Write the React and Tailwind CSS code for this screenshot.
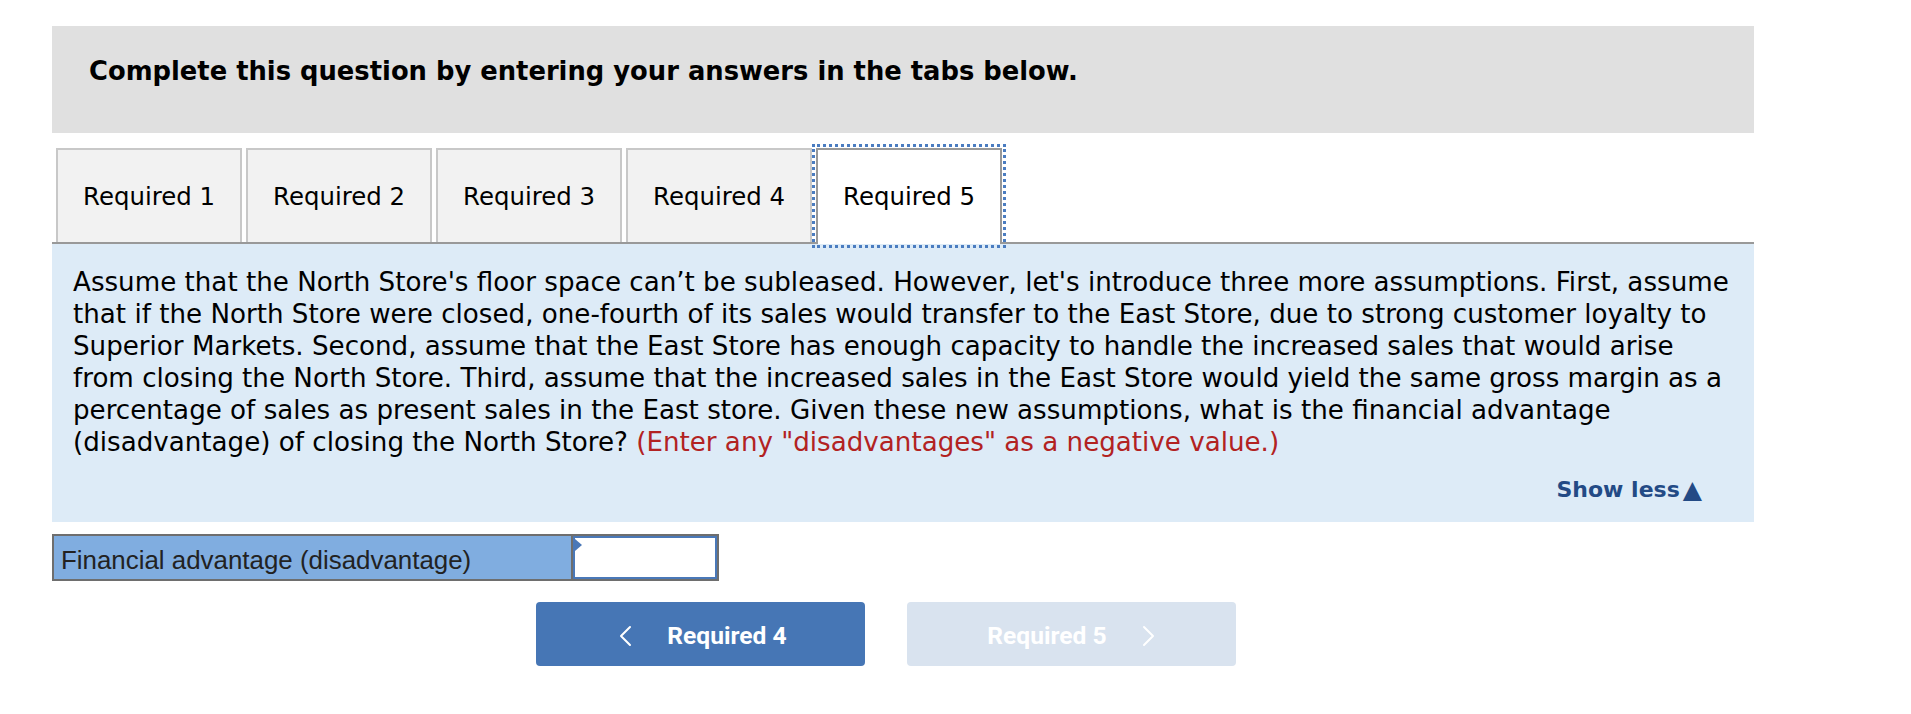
import React from 'react';

const tabs = ['Required 1', 'Required 2', 'Required 3', 'Required 4', 'Required 5'];

const Chevron = ({ dir }) => (
  <svg width="14" height="22" viewBox="0 0 14 22" fill="none" stroke="currentColor" strokeWidth="2" strokeLinecap="round" strokeLinejoin="round">
    {dir === 'left' ? <polyline points="12,2 3,11 12,20" /> : <polyline points="2,2 11,11 2,20" />}
  </svg>
);

const App = () => {
  return (
    <div className="w-[1911px] h-[714px] bg-white font-['DejaVu_Sans',Verdana,sans-serif] text-black">
      <div className="w-[1754px] pl-[52px] pt-[26px]">
        {/* Header */}
        <div className="h-[107px] bg-[#e0e0e0] pl-[37px] pt-[30px]">
          <h2 className="text-[25.8px] leading-[30px] font-bold">
            Complete this question by entering your answers in the tabs below.
          </h2>
        </div>

        {/* Tabs */}
        <div className="mt-[15px] flex items-start gap-[4px] pl-[4px] border-b-2 border-[#999]">
          {tabs.map((t, i) =>
            i === 4 ? (
              <button
                key={t}
                className="w-[186px] h-[96px] -mb-[2px] bg-white border-2 border-b-0 border-[#999] outline-[3px] outline-dotted outline-[#4a7cc0] outline-offset-[1px] text-[24.4px]"
              >
                {t}
              </button>
            ) : (
              <button
                key={t}
                className="w-[186px] h-[94px] pt-[2px] bg-[#f2f2f2] border-2 border-b-0 border-[#c8c8c8] text-[24.4px]"
              >
                {t}
              </button>
            )
          )}
        </div>

        {/* Question panel */}
        <div className="bg-[#ddebf7] pt-[22px] pl-[21px] pr-[20px] pb-[19px]">
          <p className="text-[26.15px] leading-[32px]">
            Assume that the North Store's floor space can’t be subleased. However, let's introduce three more
            assumptions. First, assume that if the North Store were closed, one-fourth of its sales would transfer to
            the East Store, due to strong customer loyalty to Superior Markets. Second, assume that the East Store has
            enough capacity to handle the increased sales that would arise from closing the North Store. Third, assume
            that the increased sales in the East Store would yield the same gross margin as a percentage of sales as
            present sales in the East store. Given these new assumptions, what is the financial advantage
            (disadvantage) of closing the North Store?{' '}
            <span className="text-[#b22222]">(Enter any "disadvantages" as a negative value.)</span>
          </p>
          <div className="mt-[19px] flex justify-end pr-[32px]">
            <button className="flex items-center text-[22px] leading-[26px] font-bold text-[#234a85]">
              Show less<span className="ml-[3px] text-[25px]">▲</span>
            </button>
          </div>
        </div>

        {/* Answer row */}
        <div className="mt-[12px] flex w-[667px] h-[47px] border-2 border-[#6e6e6e] font-['Liberation_Sans',Arial,sans-serif]">
          <div className="flex-1 flex items-center bg-[#80ade0] border-r-2 border-[#6e6e6e] pl-[7px] pt-[5px] text-[25.9px] text-[#222]">
            Financial advantage (disadvantage)
          </div>
          <div className="relative w-[144px] bg-white border-2 border-[#4a78b8]">
            <span className="absolute left-0 top-[1px] w-0 h-0 border-y-[6px] border-y-transparent border-l-[7px] border-l-[#4a78b8]" />
            <input type="text" className="w-full h-full px-2 outline-none bg-transparent" />
          </div>
        </div>

        {/* Navigation */}
        <div className="mt-[21px] flex gap-[42px] pl-[484px] font-['Roboto',sans-serif]">
          <button className="w-[329px] h-[64px] pt-[4px] pl-[4px] rounded-[4px] bg-[#4676b5] text-white flex items-center justify-center gap-[35px] text-[24.6px] font-bold">
            <Chevron dir="left" />
            <span>Required 4</span>
          </button>
          <button className="w-[329px] h-[64px] pt-[4px] rounded-[4px] bg-[#d9e3ef] text-white flex items-center justify-center gap-[35px] text-[24.6px] font-bold">
            <span>Required 5</span>
            <Chevron dir="right" />
          </button>
        </div>
      </div>
    </div>
  );
};

export default App;
